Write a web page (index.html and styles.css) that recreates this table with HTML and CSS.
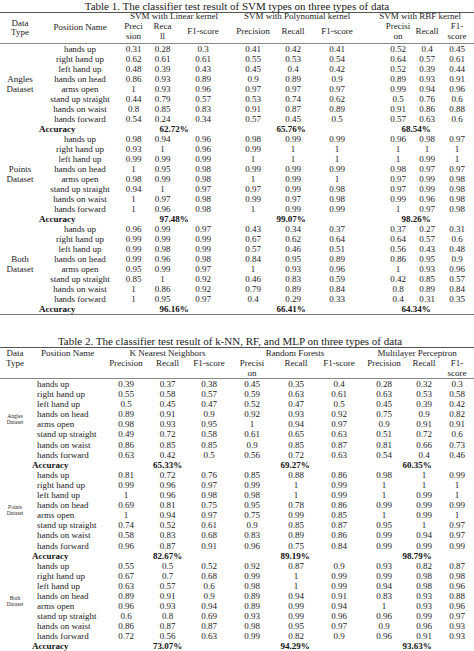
FILE: index.html
```html
<!DOCTYPE html>
<html>
<head>
<meta charset="utf-8">
<link rel="stylesheet" href="styles.css">
</head>
<body>
<div class="caption">Table 1. The classifier test result of SVM types on three types of data</div>
<table class="tbl t1">
<colgroup>
<col style="width:40px"><col style="width:80px"><col style="width:27px"><col style="width:31px"><col style="width:50px"><col style="width:50px"><col style="width:30px"><col style="width:58px"><col style="width:48px"><col style="width:26px"><col style="width:34px">
</colgroup>
<thead>
<tr class="ha">
<th rowspan="2" class="hb">Data<br>Type</th>
<th rowspan="2" class="hb">Position Name</th>
<th colspan="3">SVM with Linear kernel</th>
<th colspan="3">SVM with Polynomial kernel</th>
<th colspan="3">SVM with RBF kernel</th>
</tr>
<tr class="hr hb">
<th>Preci<br>sion</th><th>Reca<br>ll</th><th>F1-score</th>
<th>Precision</th><th>Recall</th><th>F1-score</th>
<th class="p9">Precisi<br>on</th><th>Recall</th><th>F1-<br>score</th>
</tr>
</thead>
<tbody>
<tr><td class="dt" rowspan="8">Angles<br>Dataset</td><td>hands up</td><td>0.31</td><td>0.28</td><td>0.3</td><td>0.41</td><td>0.42</td><td>0.41</td><td>0.52</td><td>0.4</td><td>0.45</td></tr>
<tr><td>right hand up</td><td>0.62</td><td>0.61</td><td>0.61</td><td>0.55</td><td>0.53</td><td>0.54</td><td>0.64</td><td>0.57</td><td>0.61</td></tr>
<tr><td>left hand up</td><td>0.48</td><td>0.39</td><td>0.43</td><td>0.45</td><td>0.4</td><td>0.42</td><td>0.52</td><td>0.39</td><td>0.44</td></tr>
<tr><td>hands on head</td><td>0.86</td><td>0.93</td><td>0.89</td><td>0.9</td><td>0.89</td><td>0.9</td><td>0.89</td><td>0.93</td><td>0.91</td></tr>
<tr><td>arms open</td><td>1</td><td>0.93</td><td>0.96</td><td>0.97</td><td>0.97</td><td>0.97</td><td>0.99</td><td>0.94</td><td>0.96</td></tr>
<tr><td>stand up straight</td><td>0.44</td><td>0.79</td><td>0.57</td><td>0.53</td><td>0.74</td><td>0.62</td><td>0.5</td><td>0.76</td><td>0.6</td></tr>
<tr><td>hands on waist</td><td>0.8</td><td>0.85</td><td>0.83</td><td>0.91</td><td>0.87</td><td>0.89</td><td>0.91</td><td>0.86</td><td>0.88</td></tr>
<tr><td>hands forward</td><td>0.54</td><td>0.24</td><td>0.34</td><td>0.57</td><td>0.45</td><td>0.5</td><td>0.57</td><td>0.63</td><td>0.6</td></tr>
<tr class="acc"><td colspan="2" class="al">Accuracy</td><td colspan="3">62.72%</td><td colspan="3" class="ap">65.76%</td><td colspan="3" class="ar">68.54%</td></tr>

<tr><td class="dt" rowspan="8">Points<br>Dataset</td><td>hands up</td><td>0.98</td><td>0.94</td><td>0.96</td><td>0.98</td><td>0.99</td><td>0.99</td><td>0.96</td><td>0.98</td><td>0.97</td></tr>
<tr><td>right hand up</td><td>0.93</td><td>1</td><td>0.96</td><td>0.99</td><td>1</td><td>1</td><td>1</td><td>1</td><td>1</td></tr>
<tr><td>left hand up</td><td>0.99</td><td>0.99</td><td>0.99</td><td>1</td><td>1</td><td>1</td><td>1</td><td>0.99</td><td>1</td></tr>
<tr><td>hands on head</td><td>1</td><td>0.95</td><td>0.98</td><td>0.99</td><td>0.99</td><td>0.99</td><td>0.98</td><td>0.97</td><td>0.97</td></tr>
<tr><td>arms open</td><td>0.98</td><td>0.99</td><td>0.98</td><td>1</td><td>0.99</td><td>1</td><td>0.97</td><td>0.99</td><td>0.98</td></tr>
<tr><td>stand up straight</td><td>0.94</td><td>1</td><td>0.97</td><td>0.97</td><td>0.99</td><td>0.98</td><td>0.97</td><td>0.99</td><td>0.98</td></tr>
<tr><td>hands on waist</td><td>1</td><td>0.97</td><td>0.98</td><td>0.99</td><td>0.97</td><td>0.98</td><td>0.99</td><td>0.96</td><td>0.98</td></tr>
<tr><td>hands forward</td><td>1</td><td>0.96</td><td>0.98</td><td>1</td><td>0.99</td><td>0.99</td><td>1</td><td>0.97</td><td>0.98</td></tr>
<tr class="acc"><td colspan="2" class="al">Accuracy</td><td colspan="3">97.48%</td><td colspan="3" class="ap">99.07%</td><td colspan="3" class="ar">98.26%</td></tr>

<tr><td class="dt" rowspan="8">Both<br>Dataset</td><td>hands up</td><td>0.96</td><td>0.99</td><td>0.97</td><td>0.43</td><td>0.34</td><td>0.37</td><td>0.37</td><td>0.27</td><td>0.31</td></tr>
<tr><td>right hand up</td><td>0.99</td><td>0.99</td><td>0.99</td><td>0.67</td><td>0.62</td><td>0.64</td><td>0.64</td><td>0.57</td><td>0.6</td></tr>
<tr><td>left hand up</td><td>0.99</td><td>0.98</td><td>0.99</td><td>0.57</td><td>0.46</td><td>0.51</td><td>0.56</td><td>0.43</td><td>0.48</td></tr>
<tr><td>hands on head</td><td>0.99</td><td>0.96</td><td>0.98</td><td>0.84</td><td>0.95</td><td>0.89</td><td>0.86</td><td>0.95</td><td>0.9</td></tr>
<tr><td>arms open</td><td>0.95</td><td>0.99</td><td>0.97</td><td>1</td><td>0.93</td><td>0.96</td><td>1</td><td>0.93</td><td>0.96</td></tr>
<tr><td>stand up straight</td><td>0.85</td><td>1</td><td>0.92</td><td>0.46</td><td>0.83</td><td>0.59</td><td>0.42</td><td>0.85</td><td>0.57</td></tr>
<tr><td>hands on waist</td><td>1</td><td>0.86</td><td>0.92</td><td>0.79</td><td>0.89</td><td>0.84</td><td>0.8</td><td>0.89</td><td>0.84</td></tr>
<tr><td>hands forward</td><td>1</td><td>0.95</td><td>0.97</td><td>0.4</td><td>0.29</td><td>0.33</td><td>0.4</td><td>0.31</td><td>0.35</td></tr>
<tr class="acc"><td colspan="2" class="al">Accuracy</td><td colspan="3">96.16%</td><td colspan="3" class="ap">66.41%</td><td colspan="3" class="ar">64.34%</td></tr>
</tbody>
</table>

<div class="caption caption2">Table 2. The classifier test result of k-NN, RF, and MLP on three types of data</div>
<table class="tbl t2">
<colgroup>
<col style="width:30px"><col style="width:75px"><col style="width:42px"><col style="width:41px"><col style="width:42px"><col style="width:44px"><col style="width:44px"><col style="width:42px"><col style="width:48px"><col style="width:32px"><col style="width:34px">
</colgroup>
<thead>
<tr class="ha">
<th rowspan="2" class="hb top">Data<br>Type</th>
<th rowspan="2" class="hb top">Position Name</th>
<th colspan="3">K Nearest Neighbors</th>
<th colspan="3">Random Forests</th>
<th colspan="3">Multilayer Perceptron</th>
</tr>
<tr class="hr hb">
<th>Precision</th><th>Recall</th><th>F1-score</th>
<th>Precisi<br>on</th><th>Recall</th><th>F1-score</th>
<th>Precision</th><th>Recall</th><th>F1-<br>score</th>
</tr>
</thead>
<tbody>
<tr><td class="dt" rowspan="8">Angles<br>Dataset</td><td>hands up</td><td>0.39</td><td>0.37</td><td>0.38</td><td>0.45</td><td>0.35</td><td>0.4</td><td>0.28</td><td>0.32</td><td>0.3</td></tr>
<tr><td>right hand up</td><td>0.55</td><td>0.58</td><td>0.57</td><td>0.59</td><td>0.63</td><td>0.61</td><td>0.63</td><td>0.53</td><td>0.58</td></tr>
<tr><td>left hand up</td><td>0.5</td><td>0.45</td><td>0.47</td><td>0.52</td><td>0.47</td><td>0.5</td><td>0.45</td><td>0.39</td><td>0.42</td></tr>
<tr><td>hands on head</td><td>0.89</td><td>0.91</td><td>0.9</td><td>0.92</td><td>0.93</td><td>0.92</td><td>0.75</td><td>0.9</td><td>0.82</td></tr>
<tr><td>arms open</td><td>0.98</td><td>0.93</td><td>0.95</td><td>1</td><td>0.94</td><td>0.97</td><td>0.9</td><td>0.91</td><td>0.91</td></tr>
<tr><td>stand up straight</td><td>0.49</td><td>0.72</td><td>0.58</td><td>0.61</td><td>0.65</td><td>0.63</td><td>0.51</td><td>0.72</td><td>0.6</td></tr>
<tr><td>hands on waist</td><td>0.86</td><td>0.85</td><td>0.85</td><td>0.9</td><td>0.85</td><td>0.87</td><td>0.81</td><td>0.66</td><td>0.73</td></tr>
<tr><td>hands forward</td><td>0.63</td><td>0.42</td><td>0.5</td><td>0.56</td><td>0.72</td><td>0.63</td><td>0.54</td><td>0.4</td><td>0.46</td></tr>
<tr class="acc"><td colspan="2" class="al">Accuracy</td><td colspan="3">65.33%</td><td colspan="3">69.27%</td><td colspan="3">60.35%</td></tr>

<tr><td class="dt" rowspan="8">Points<br>Dataset</td><td>hands up</td><td>0.81</td><td>0.72</td><td>0.76</td><td>0.85</td><td>0.88</td><td>0.86</td><td>0.98</td><td>1</td><td>0.99</td></tr>
<tr><td>right hand up</td><td>0.99</td><td>0.96</td><td>0.97</td><td>0.99</td><td>1</td><td>0.99</td><td>1</td><td>1</td><td>1</td></tr>
<tr><td>left hand up</td><td>1</td><td>0.96</td><td>0.98</td><td>0.98</td><td>1</td><td>0.99</td><td>1</td><td>0.99</td><td>1</td></tr>
<tr><td>hands on head</td><td>0.69</td><td>0.81</td><td>0.75</td><td>0.95</td><td>0.78</td><td>0.86</td><td>0.99</td><td>0.99</td><td>0.99</td></tr>
<tr><td>arms open</td><td>1</td><td>0.94</td><td>0.97</td><td>0.75</td><td>0.99</td><td>0.85</td><td>1</td><td>0.99</td><td>1</td></tr>
<tr><td>stand up straight</td><td>0.74</td><td>0.52</td><td>0.61</td><td>0.9</td><td>0.85</td><td>0.87</td><td>0.95</td><td>1</td><td>0.97</td></tr>
<tr><td>hands on waist</td><td>0.58</td><td>0.83</td><td>0.68</td><td>0.83</td><td>0.89</td><td>0.86</td><td>0.99</td><td>0.94</td><td>0.97</td></tr>
<tr><td>hands forward</td><td>0.96</td><td>0.87</td><td>0.91</td><td>0.96</td><td>0.75</td><td>0.84</td><td>0.99</td><td>0.99</td><td>0.99</td></tr>
<tr class="acc"><td colspan="2" class="al">Accuracy</td><td colspan="3">82.67%</td><td colspan="3">89.19%</td><td colspan="3">98.79%</td></tr>

<tr><td class="dt" rowspan="8">Both<br>Dataset</td><td>hands up</td><td>0.55</td><td>0.5</td><td>0.52</td><td>0.92</td><td>0.87</td><td>0.9</td><td>0.93</td><td>0.82</td><td>0.87</td></tr>
<tr><td>right hand up</td><td>0.67</td><td>0.7</td><td>0.68</td><td>0.99</td><td>1</td><td>0.99</td><td>0.99</td><td>0.98</td><td>0.98</td></tr>
<tr><td>left hand up</td><td>0.63</td><td>0.57</td><td>0.6</td><td>0.98</td><td>1</td><td>0.99</td><td>0.94</td><td>0.98</td><td>0.96</td></tr>
<tr><td>hands on head</td><td>0.89</td><td>0.91</td><td>0.9</td><td>0.89</td><td>0.94</td><td>0.91</td><td>0.83</td><td>0.93</td><td>0.88</td></tr>
<tr><td>arms open</td><td>0.96</td><td>0.93</td><td>0.94</td><td>0.89</td><td>0.99</td><td>0.94</td><td>1</td><td>0.93</td><td>0.96</td></tr>
<tr><td>stand up straight</td><td>0.6</td><td>0.8</td><td>0.69</td><td>0.93</td><td>0.99</td><td>0.96</td><td>0.96</td><td>0.99</td><td>0.97</td></tr>
<tr><td>hands on waist</td><td>0.86</td><td>0.87</td><td>0.87</td><td>0.98</td><td>0.95</td><td>0.97</td><td>0.9</td><td>0.96</td><td>0.93</td></tr>
<tr><td>hands forward</td><td>0.72</td><td>0.56</td><td>0.63</td><td>0.99</td><td>0.82</td><td>0.9</td><td>0.96</td><td>0.91</td><td>0.93</td></tr>
<tr class="acc"><td colspan="2" class="al">Accuracy</td><td colspan="3">73.07%</td><td colspan="3">94.29%</td><td colspan="3">93.63%</td></tr>
</tbody>
</table>
</body>
</html>
```

FILE: styles.css
```css
html, body {
  margin: 0;
  padding: 0;
  background: #ffffff;
}
body {
  width: 474px;
  font-family: "Liberation Serif", "Times New Roman", serif;
  color: #222222;
}
.caption {
  font-size: 11px;
  line-height: 12px;
  height: 12px;
  text-align: center;
  white-space: nowrap;
  color: #1a1a1a;
}
.caption2 {
  margin-top: 19.5px;
  padding-right: 14px;
}
.tbl {
  width: 474px;
  table-layout: fixed;
  border-collapse: collapse;
  border-top: 1.5px solid #555555;
  border-bottom: 1px solid #777777;
  font-size: 9px;
}
.tbl th, .tbl td {
  padding: 0;
  text-align: center;
  font-weight: normal;
  white-space: nowrap;
  overflow: visible;
}
.tbl td {
  line-height: 10px;
  height: 10px;
}
.t1 .ha th {
  height: 7px;
  line-height: 7px;
}
.t1 .hr th {
  height: 23px;
  line-height: 9.5px;
}
.t1 th[rowspan] {
  line-height: 9.5px;
}
.tbl .hb, .tbl .hb th {
  border-bottom: 1px solid #888888;
}
.t1 tbody tr:not(.acc) td:nth-last-child(3),
.t1 .p9 {
  padding-left: 16px;
}
.acc td {
  font-weight: bold;
  color: #111111;
}
.t1 .al {
  text-align: left;
  padding-left: 39px;
}
.t1 .ap {
  padding-right: 12px;
}
.t1 .ar {
  padding-right: 8px;
}

.t2 td {
  line-height: 10.1px;
  height: 10.1px;
}
.t2 .ha th {
  height: 10.5px;
  line-height: 10px;
}
.t2 .hr th {
  height: 19.5px;
  line-height: 10px;
  vertical-align: top;
}
.t2 th.top {
  vertical-align: top;
  line-height: 10px;
  padding-top: 0.5px;
}
.t2 tbody tr:not(.acc) td:nth-last-child(10) {
  text-align: left;
  padding-left: 7px;
}
.t2 .dt {
  font-size: 5.5px;
  line-height: 6px;
}
.t2 .al {
  text-align: left;
  padding-left: 32px;
}
```
